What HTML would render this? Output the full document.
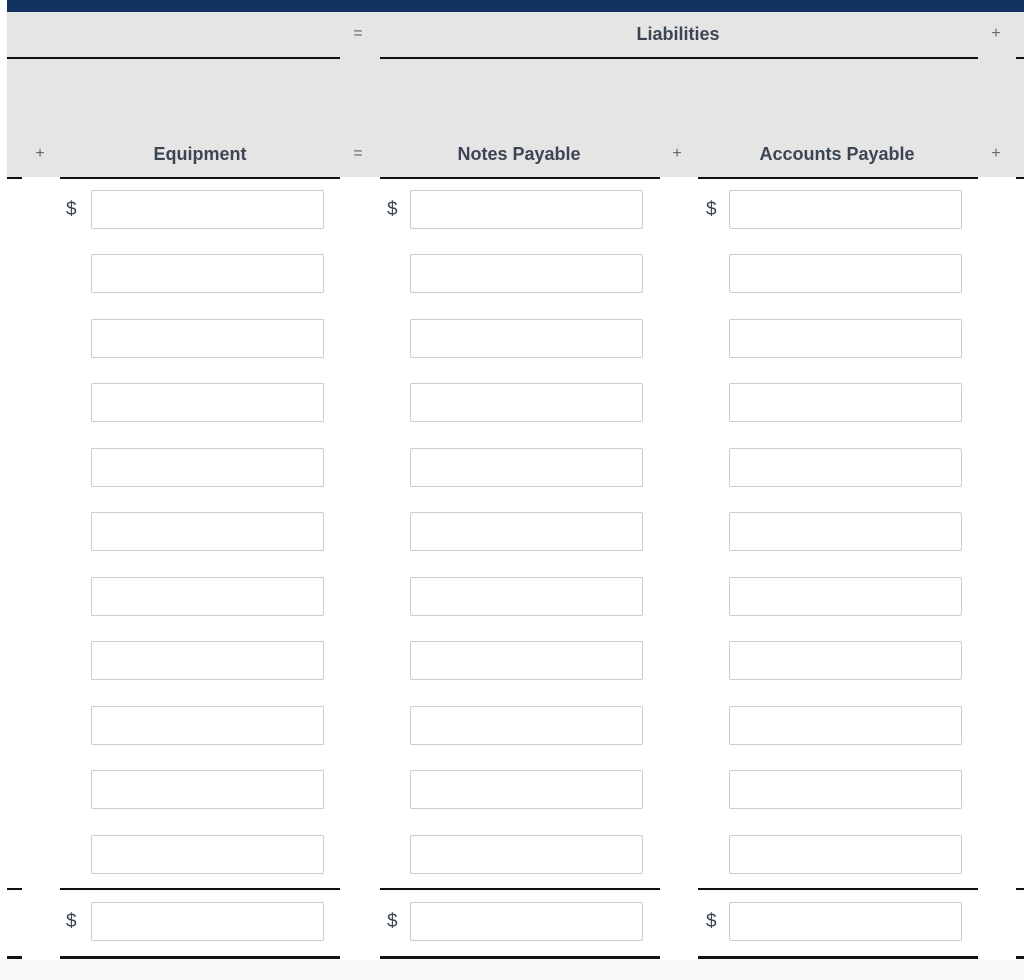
<html><head><style>
body{margin:0;width:1024px;height:980px;background:#fff;font-family:"Liberation Sans",sans-serif;position:relative;overflow:hidden}
.a{position:absolute}
.bot{left:0;top:960px;width:1024px;height:20px;background:#fafafa}
.nav{left:7px;top:0;width:1017px;height:12px;background:#12335f}
.g{left:7px;top:12px;width:1017px;height:165px;background:#e5e5e5}
.l{height:2px;background:#111}
.t{font-size:18px;font-weight:bold;color:#3c4652;text-align:center;width:200px;margin-left:-100px}
.s{font-size:16px;color:#666;width:20px;margin-left:-10px;text-align:center}
.in{width:231px;height:37px;border:1px solid #ccc;border-radius:2px;background:#fff}
.d{font-size:19px;color:#3c4652}
</style></head><body>
<div class="a bot"></div><div class="a nav"></div><div class="a g"></div>
<div class="a l" style="top:57px;left:7px;width:333px"></div>
<div class="a l" style="top:57px;left:380px;width:598px"></div>
<div class="a l" style="top:57px;left:1016px;width:8px"></div>
<div class="a s" style="left:358px;top:25px">=</div>
<div class="a t" style="left:678px;top:24px">Liabilities</div>
<div class="a s" style="left:996px;top:25px">+</div>
<div class="a s" style="left:40px;top:145px">+</div>
<div class="a t" style="left:200px;top:144px">Equipment</div>
<div class="a s" style="left:358px;top:145px">=</div>
<div class="a t" style="left:519px;top:144px">Notes Payable</div>
<div class="a s" style="left:677px;top:145px">+</div>
<div class="a t" style="left:837px;top:144px">Accounts Payable</div>
<div class="a s" style="left:996px;top:145px">+</div>
<div class="a l" style="top:177px;left:7px;width:15px"></div>
<div class="a l" style="top:177px;left:60px;width:280px"></div>
<div class="a l" style="top:177px;left:380px;width:280px"></div>
<div class="a l" style="top:177px;left:698px;width:280px"></div>
<div class="a l" style="top:177px;left:1016px;width:8px"></div>
<div id="rows"></div>
<div class="a l" style="top:888px;left:7px;width:15px"></div>
<div class="a l" style="top:888px;left:60px;width:280px"></div>
<div class="a l" style="top:888px;left:380px;width:280px"></div>
<div class="a l" style="top:888px;left:698px;width:280px"></div>
<div class="a l" style="top:888px;left:1016px;width:8px"></div>
<div class="a l" style="top:956px;left:7px;width:15px;height:3px"></div>
<div class="a l" style="top:956px;left:60px;width:280px;height:3px"></div>
<div class="a l" style="top:956px;left:380px;width:280px;height:3px"></div>
<div class="a l" style="top:956px;left:698px;width:280px;height:3px"></div>
<div class="a l" style="top:956px;left:1016px;width:8px;height:3px"></div>
<script>
var h='',ys=[190,254,319,383,448,512,577,641,706,770,835,902],xs=[91,410,729],dx=[66,387,706];
ys.forEach(function(y,i){xs.forEach(function(x,j){h+='<div class="a in" style="left:'+x+'px;top:'+y+'px"></div>';if(i==0||i==11)h+='<div class="a d" style="left:'+dx[j]+'px;top:'+(y+9)+'px">$</div>';});});
document.getElementById('rows').innerHTML=h;
</script>
</body></html>
